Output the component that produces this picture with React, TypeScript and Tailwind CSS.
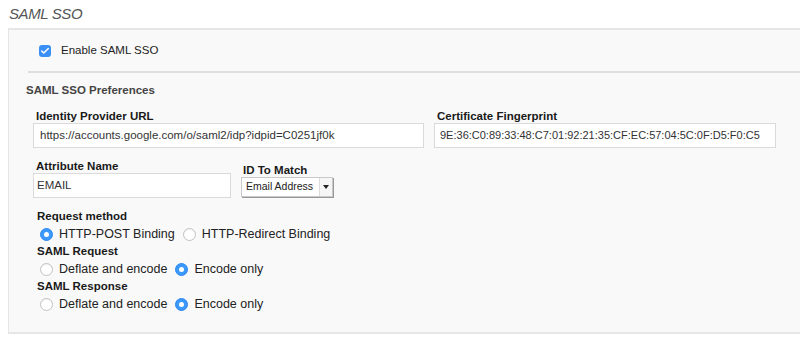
import { Check } from 'lucide-react'

function Radio({ checked }: { checked?: boolean }) {
  return checked ? (
    <span className="flex h-[13px] w-[13px] shrink-0 items-center justify-center rounded-full border border-[#2f87ef] bg-[#3b99fc]">
      <span className="h-[5px] w-[5px] rounded-full bg-white" />
    </span>
  ) : (
    <span className="h-[13px] w-[13px] shrink-0 rounded-full border border-[#c2c2c2] bg-white shadow-[inset_0_1px_1px_rgba(0,0,0,0.06)]" />
  )
}

function RadioGroup({ options, selected }: { options: string[]; selected: number }) {
  return (
    <div className="flex h-[21px] items-center pl-[31px] pt-[2px] text-[12.5px] text-[#222]">
      {options.map((o, i) => (
        <label key={o} className="mr-[8px] flex items-center gap-[6px]">
          <Radio checked={i === selected} />
          <span>{o}</span>
        </label>
      ))}
    </div>
  )
}

function Label({ children, className = '' }: { children: React.ReactNode; className?: string }) {
  return <div className={`h-[14px] text-[11.5px] font-bold leading-[14px] text-[#1a1a1a] ${className}`}>{children}</div>
}

export default function App() {
  return (
    <div className="h-[343px] w-[800px] overflow-hidden bg-white font-['Liberation_Sans',Arial,sans-serif]">
      <div className="h-[28px] pl-[9px] pt-[5px] text-[15px] italic leading-[18px] tracking-[-0.4px] text-[#555]">SAML SSO</div>

      <div className="ml-[8px] h-[306px] border-b-2 border-l border-t-2 border-[#e6e6e6] bg-[#f9f9f9]">
        {/* Enable row */}
        <div className="flex h-[41px] items-center pl-[30px]">
          <span className="flex h-[12px] w-[12px] items-center justify-center rounded-[3px] bg-[#3b8ff5]">
            <Check size={10} strokeWidth={3.5} className="text-white" />
          </span>
          <span className="ml-[10px] text-[11.5px] text-[#222]">Enable SAML SSO</span>
        </div>
        <div className="ml-[19px] h-[2px] bg-[#dedede]" />

        <div className="mt-[10px] pl-[17px] text-[11.5px] font-bold leading-[14px] text-[#444]">SAML SSO Preferences</div>

        {/* URL + fingerprint */}
        <div className="mt-[12px] flex gap-[10px] pl-[24px]">
          <div className="w-[391px]">
            <Label className="pl-[3px]">Identity Provider URL</Label>
            <div className="flex h-[25px] items-center border border-[#dadada] bg-white pl-[6px] text-[11.5px] text-[#333]">
              https://accounts.google.com/o/saml2/idp?idpid=C0251jf0k
            </div>
          </div>
          <div className="w-[342px]">
            <Label className="pl-[3px]">Certificate Fingerprint</Label>
            <div className="flex h-[25px] items-center border border-[#dadada] bg-white pl-[5px] text-[11px] text-[#333]">
              9E:36:C0:89:33:48:C7:01:92:21:35:CF:EC:57:04:5C:0F:D5:F0:C5
            </div>
          </div>
        </div>

        {/* Attribute + ID to match */}
        <div className="mt-[11px] flex items-end gap-[10px] pl-[24px]">
          <div className="w-[198px]">
            <Label className="pl-[3px]">Attribute Name</Label>
            <div className="flex h-[25px] items-center border border-[#dadada] bg-white pl-[3px] text-[11.5px] text-[#333]">
              EMAIL
            </div>
          </div>
          <div className="mb-[1px] w-[92px]">
            <Label className="pl-[2px]">ID To Match</Label>
            <div className="flex h-[20px] items-center border border-[#c9c9c9] bg-white text-[10.5px] text-[#222] shadow-[1px_1px_0_#999]">
              <span className="flex-1 pl-[4px]">Email Address</span>
              <span className="flex h-full w-[13px] items-center justify-center border-l border-[#dcdcdc] bg-[#f6f6f6]">
                <span className="h-0 w-0 border-l-[3px] border-r-[3px] border-t-[4px] border-l-transparent border-r-transparent border-t-[#222]" />
              </span>
            </div>
          </div>
        </div>

        <Label className="mt-[11px] pl-[28px]">Request method</Label>
        <RadioGroup options={['HTTP-POST Binding', 'HTTP-Redirect Binding']} selected={0} />
        <Label className="pl-[28px]">SAML Request</Label>
        <RadioGroup options={['Deflate and encode', 'Encode only']} selected={1} />
        <Label className="pl-[28px]">SAML Response</Label>
        <RadioGroup options={['Deflate and encode', 'Encode only']} selected={1} />
      </div>
    </div>
  )
}
